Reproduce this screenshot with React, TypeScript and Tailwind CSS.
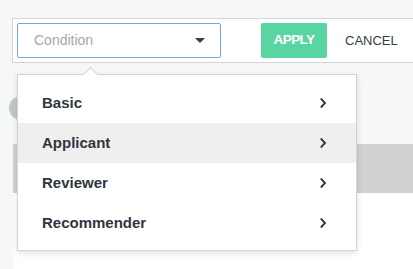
import React from "react";

function Chevron() {
  return (
    <svg width="8" height="12" viewBox="0 0 8 12" fill="none">
      <path d="M1.8 1.5 L6 6 L1.8 10.5" stroke="#333e48" strokeWidth="1.9" strokeLinecap="butt" strokeLinejoin="miter" />
    </svg>
  );
}

const items = ["Basic", "Applicant", "Reviewer", "Recommender"];

export default function App() {
  return (
    <div
      className="relative w-[413px] h-[269px] overflow-hidden bg-[#f6f7f7]"
      style={{ fontFamily: '"Liberation Sans", Arial, sans-serif' }}
    >
      <div className="pt-[18px] pl-[12px] flex flex-col h-full">
        {/* toolbar */}
        <div className="h-[45px] mr-[-4px] border border-[#d4d5d5] bg-white flex items-center pl-[4px] shrink-0">
          <div className="w-[204px] h-[35px] border border-[#6eaaee] rounded-[2px] flex items-center justify-between pl-[16px] pr-[15px]">
            <span className="text-[14px] text-[#a3a6ab]">Condition</span>
            <svg width="10" height="5" viewBox="0 0 10 5">
              <path d="M0 0 H10 L5 5 Z" fill="#333e48" />
            </svg>
          </div>
          <div className="ml-[40px] w-[66px] h-[35px] rounded-[2px] bg-[#58d5a0] flex items-center justify-center">
            <span className="text-[13.5px] font-bold tracking-[-0.6px] text-white">APPLY</span>
          </div>
          <span className="ml-[18px] text-[13px] text-[#333e48]">CANCEL</span>
        </div>
        {/* page content */}
        <div className="flex-1 ml-[1px] flex flex-col">
          <div className="h-[81px] relative">
            <div className="absolute left-[-4px] top-[33px] w-[24px] h-[24px] rounded-full bg-[#c3c7cb]" />
          </div>
          <div className="h-[49px] bg-[#d0d1d3]" />
          <div className="flex-1 bg-white" />
        </div>
      </div>

      {/* dropdown menu */}
      <div className="absolute left-[17px] top-[74px] w-[340px] h-[177px] bg-white border border-[#d2d3d3] shadow-[0_2px_6px_rgba(0,0,0,0.12)] py-[8px]">
        <div className="absolute left-[67px] top-[-6px] w-[11px] h-[11px] rotate-45 bg-white border-l border-t border-[#d2d3d3]" />
        {items.map((it) => (
          <div
            key={it}
            className={`relative h-[40px] flex items-center justify-between pl-[24px] pr-[29px] ${
              it === "Applicant" ? "bg-[#efefef]" : ""
            }`}
          >
            <span className="text-[15px] font-bold text-[#2e3640]">{it}</span>
            <Chevron />
          </div>
        ))}
      </div>
    </div>
  );
}
